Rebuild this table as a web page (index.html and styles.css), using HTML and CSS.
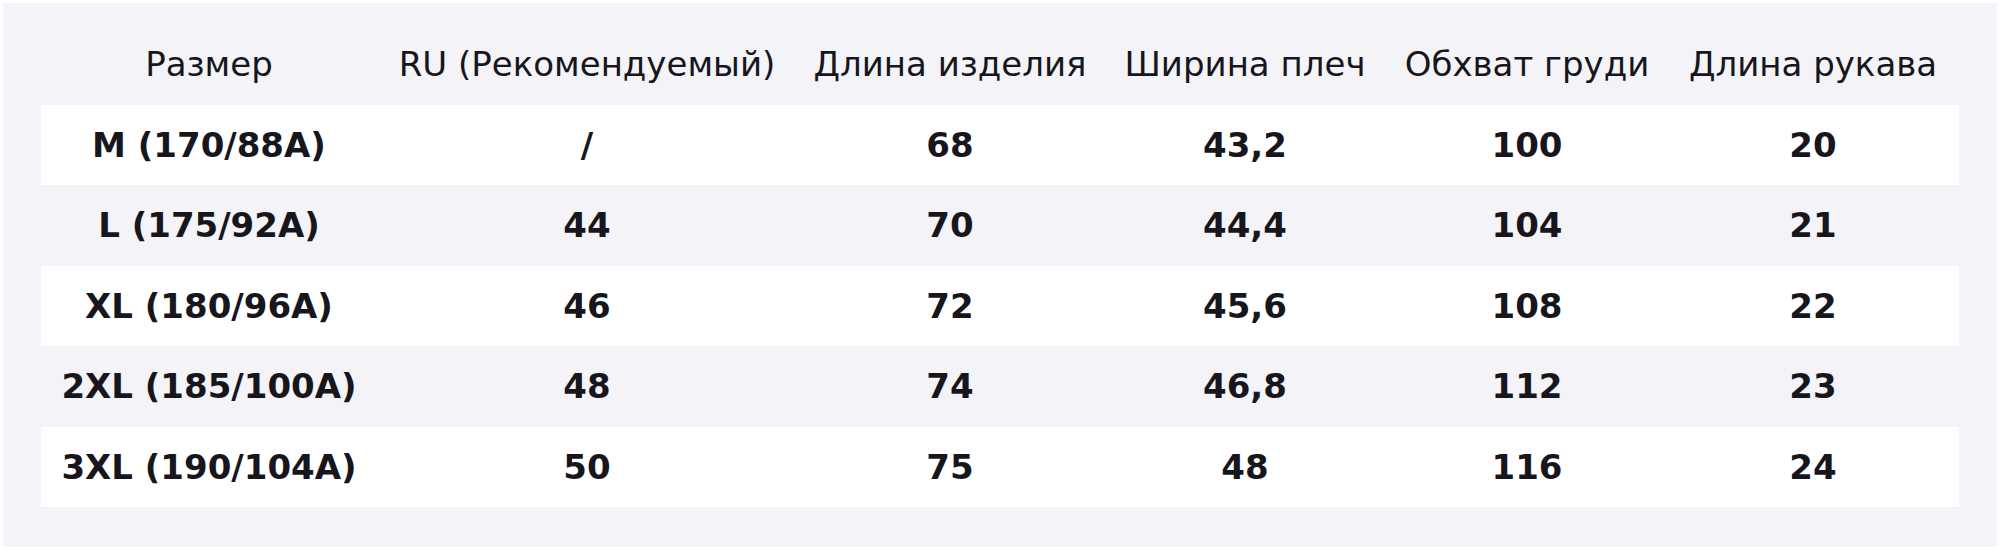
FILE: index.html
```html
<!DOCTYPE html>
<html lang="ru">
<head>
<meta charset="utf-8">
<title>Таблица размеров</title>
<link rel="stylesheet" href="styles.css">
</head>
<body>
<div class="wrap">
  <table class="sizes">
    <colgroup>
      <col class="c1"><col class="c2"><col class="c3"><col class="c4"><col class="c5"><col class="c6">
    </colgroup>
    <thead>
      <tr>
        <th>Размер</th>
        <th>RU (Рекомендуемый)</th>
        <th>Длина изделия</th>
        <th>Ширина плеч</th>
        <th>Обхват груди</th>
        <th>Длина рукава</th>
      </tr>
    </thead>
    <tbody>
      <tr class="odd"><td>M (170/88A)</td><td>/</td><td>68</td><td>43,2</td><td>100</td><td>20</td></tr>
      <tr><td>L (175/92A)</td><td>44</td><td>70</td><td>44,4</td><td>104</td><td>21</td></tr>
      <tr class="odd"><td>XL (180/96A)</td><td>46</td><td>72</td><td>45,6</td><td>108</td><td>22</td></tr>
      <tr><td>2XL (185/100A)</td><td>48</td><td>74</td><td>46,8</td><td>112</td><td>23</td></tr>
      <tr class="odd"><td>3XL (190/104A)</td><td>50</td><td>75</td><td>48</td><td>116</td><td>24</td></tr>
    </tbody>
  </table>
</div>
</body>
</html>
```
FILE: styles.css
```css
html, body {
  margin: 0;
  padding: 0;
  background: #ffffff;
}

.wrap {
  margin: 3px;
  height: 544px;
  box-sizing: border-box;
  padding: 21px 38px 40px;
  background: #f3f3f8;
}

.sizes {
  width: 100%;
  border-collapse: collapse;
  table-layout: fixed;
  font-family: "DejaVu Sans", "Noto Sans", sans-serif;
  font-size: 34px;
  color: #16161c;
}

.c1 { width: 336px; }
.c2 { width: 420px; }
.c3 { width: 306px; }
.c4 { width: 284px; }
.c5 { width: 280px; }
.c6 { width: 292px; }

.sizes th,
.sizes td {
  height: 80.5px;
  padding: 0;
  text-align: center;
  vertical-align: middle;
  white-space: nowrap;
}

.sizes th {
  font-weight: normal;
}

.sizes td {
  font-weight: bold;
}

.sizes tr.odd td {
  background: #ffffff;
}
```
